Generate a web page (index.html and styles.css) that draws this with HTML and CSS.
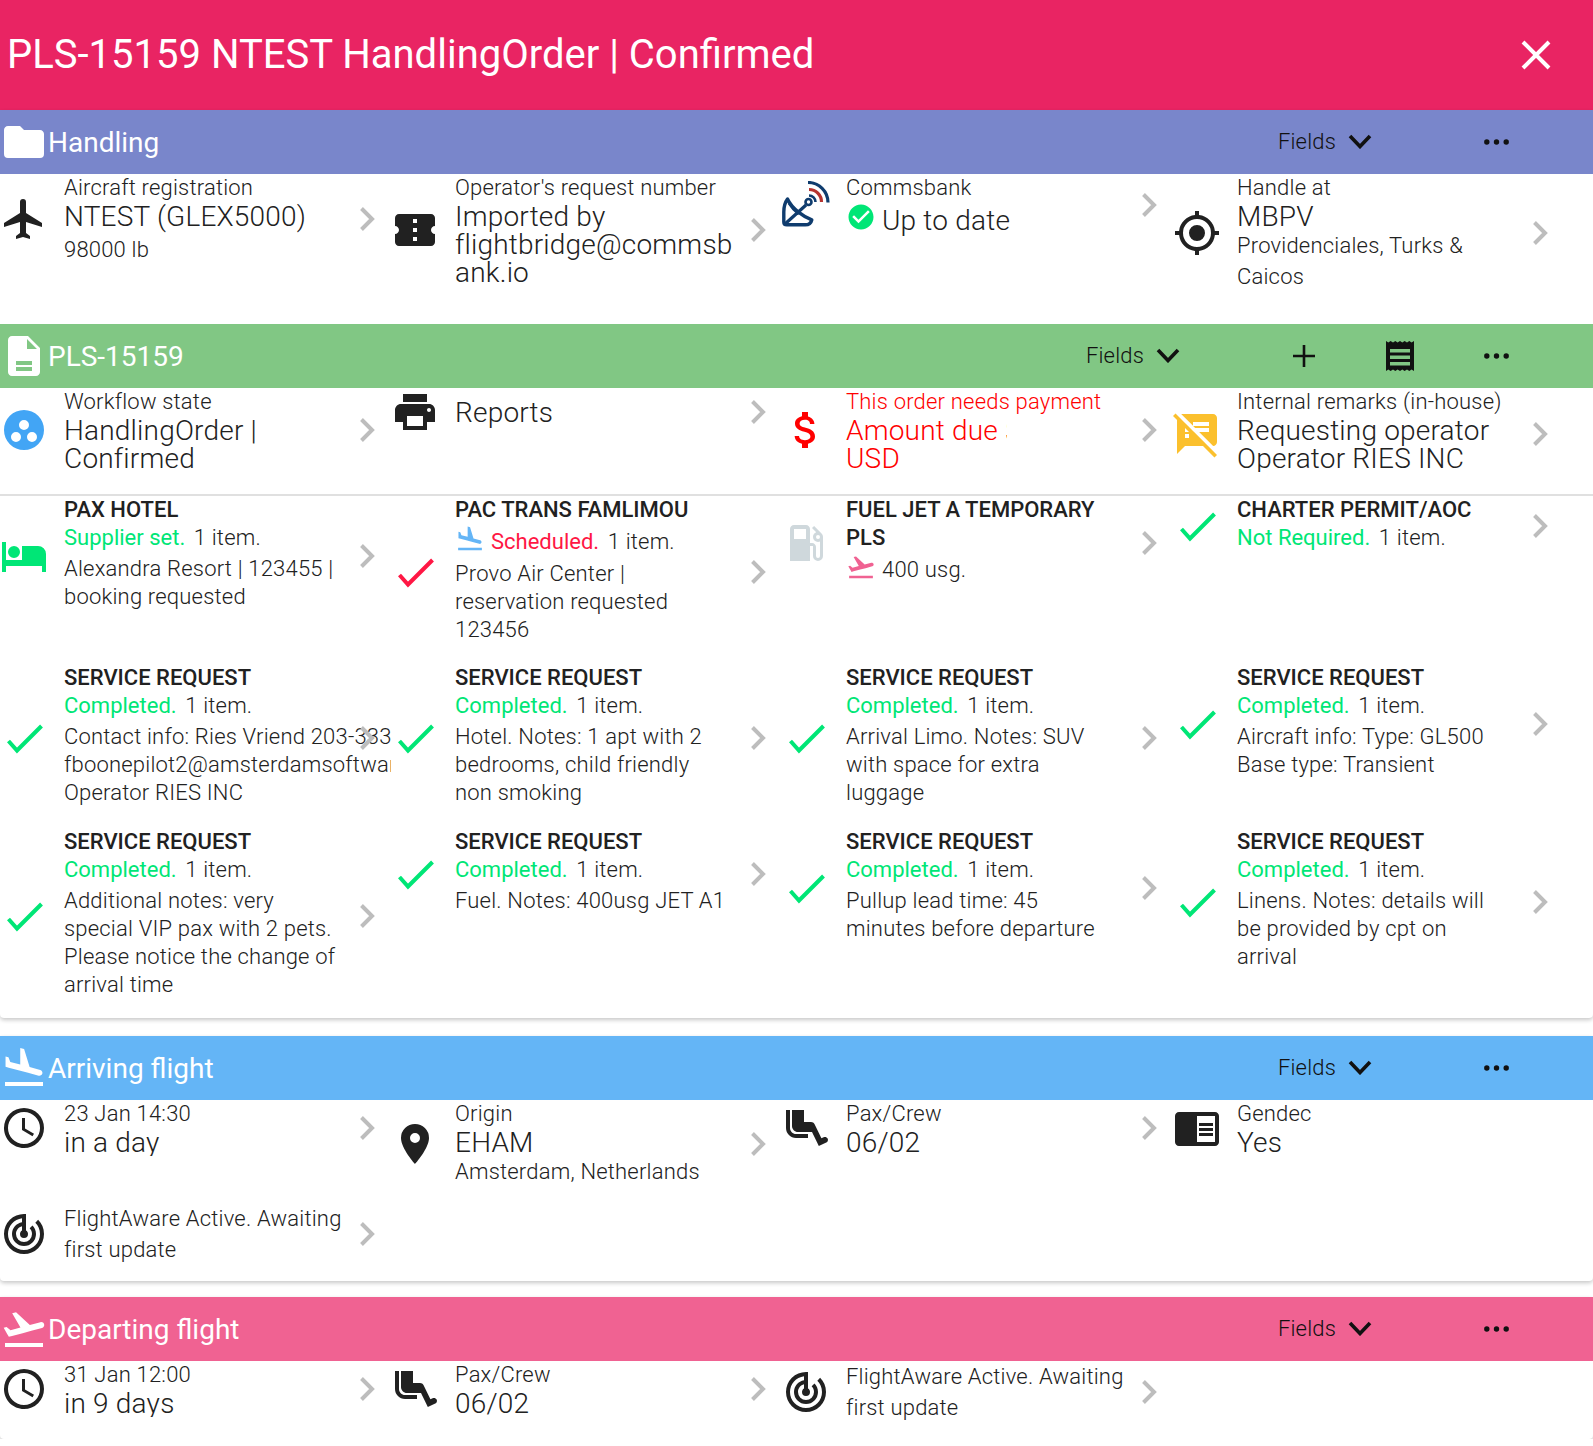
FILE: index.html
```html
<!DOCTYPE html>
<html lang="en">
<head>
<meta charset="utf-8">
<title>PLS-15159 NTEST HandlingOrder | Confirmed</title>
<link rel="stylesheet" href="styles.css">
</head>
<body>
<svg class="defs" width="0" height="0" aria-hidden="true">
  <defs>
    <symbol id="chev" viewBox="0 0 16 24"><path d="M2.5 1.5 13 12 2.5 22.5" fill="none" stroke="currentColor" stroke-width="4"/></symbol>
    <symbol id="down" viewBox="0 0 24 15"><path d="M2 2l10 10.500L22 2" fill="none" stroke="currentColor" stroke-width="3.600"/></symbol>
    <symbol id="dots" viewBox="0 0 25 6"><circle cx="2.800" cy="3" r="2.700"/><circle cx="12.500" cy="3" r="2.700"/><circle cx="22.200" cy="3" r="2.700"/></symbol>
    <symbol id="check" viewBox="0 0 48 48"><path d="M8.500 27 17 36.500 41.500 12" fill="none" stroke="currentColor" stroke-width="4"/></symbol>
    <symbol id="land" viewBox="0 0 24 24"><path d="M2.5 19h19v2h-19zm7.180-5.730l4.350 1.160 5.310 1.420c.8.210 1.620-.26 1.840-1.060.21-.8-.26-1.620-1.060-1.840l-5.310-1.420-2.760-9.020L10.120 2v8.280L5.150 8.950l-.93-2.320-1.450-.39v5.170l1.600.43 5.310 1.430z"/></symbol>
    <symbol id="takeoff" viewBox="0 0 24 24"><path d="M2.500 19h19v2h-19zm19.570-9.360c-.21-.8-1.040-1.280-1.840-1.060L14.920 10l-6.900-6.430-1.930.51 4.140 7.170-4.970 1.330-1.970-1.540-1.450.39 1.820 3.160.77 1.330 1.600-.43 5.310-1.420 4.350-1.160L21 11.490c.81-.23 1.280-1.050 1.070-1.850z"/></symbol>
    <symbol id="clock" viewBox="0 0 24 24"><path d="M12,20A8,8 0 0,0 20,12A8,8 0 0,0 12,4A8,8 0 0,0 4,12A8,8 0 0,0 12,20M12,2A10,10 0 0,1 22,12A10,10 0 0,1 12,22C6.470,22 2,17.500 2,12A10,10 0 0,1 12,2M12.500,7V12.250L17,14.920L16.250,16.150L11,13V7H12.500Z"/></symbol>
    <symbol id="seat" viewBox="0 0 24 24"><path d="M4 12V3H2v9c0 2.760 2.240 5 5 5h6v-2H7c-1.660 0-3-1.340-3-3zm18.830 5.240c-.38-.72-1.290-.97-2.030-.63l-1.090.5-3.410-6.980c-.34-.68-1.030-1.120-1.790-1.120L11 9V3H5v8c0 1.660 1.340 3 3 3h7l3.410 7 3.720-1.700c.77-.36 1.100-1.300.7-2.060z"/></symbol>
    <symbol id="radar" viewBox="0 0 24 24"><path d="M19.070,4.930L17.660,6.340C19.100,7.790 20,9.790 20,12A8,8 0 0,1 12,20A8,8 0 0,1 4,12C4,7.920 7.050,4.560 11,4.070V6.090C8.160,6.570 6,9.030 6,12A6,6 0 0,0 12,18A6,6 0 0,0 18,12C18,10.340 17.330,8.840 16.240,7.760L14.830,9.170C15.550,9.900 16,10.900 16,12A4,4 0 0,1 12,16A4,4 0 0,1 8,12C8,10.140 9.280,8.590 11,8.140V10.280C10.400,10.630 10,11.260 10,12A2,2 0 0,0 12,14A2,2 0 0,0 14,12C14,11.260 13.600,10.620 13,10.280V2H12A10,10 0 0,0 2,12A10,10 0 0,0 12,22A10,10 0 0,0 22,12C22,9.240 20.880,6.740 19.070,4.930Z"/></symbol>
  </defs>
</svg>

<header class="topbar">
  <h1 class="topbar-title">PLS-15159 NTEST HandlingOrder | Confirmed</h1>
  <svg class="close" viewBox="0 0 30 30"><path d="M2 2 28 28M28 2 2 28" fill="none" stroke="#fff" stroke-width="4"/></svg>
</header>

<section class="card card-flat">
  <div class="bar bar-purple">
    <svg class="ico ico-white" viewBox="0 0 24 24"><path d="M10,4H4C2.890,4 2,4.890 2,6V18A2,2 0 0,0 4,20H20A2,2 0 0,0 22,18V8C22,6.890 21.100,6 20,6H12L10,4Z"/></svg>
    <span class="bar-title">Handling</span>
    <div class="fields">Fields<svg class="down"><use href="#down"/></svg></div>
    <div class="action"><svg class="dots"><use href="#dots"/></svg></div>
  </div>
  <div class="grid grid-pad-16">
    <div class="item">
      <svg class="ico" viewBox="0 0 24 24"><path d="M21,16V14L13,9V3.500A1.500,1.500 0 0,0 11.500,2A1.500,1.500 0 0,0 10,3.500V9L2,14V16L10,13.500V19L8,20.500V22L11.500,21L15,22V20.500L13,19V13.500L21,16Z"/></svg>
      <div class="txt"><div class="label">Aircraft registration</div><div class="value">NTEST (GLEX5000)</div><div class="note note-lb">98000 lb</div></div>
      <svg class="chev"><use href="#chev"/></svg>
    </div>
    <div class="item">
      <svg class="ico" viewBox="0 0 24 24"><path d="M22 10V6c0-1.110-.9-2-2-2H4c-1.100 0-1.990.89-1.990 2v4c1.100 0 1.990.9 1.990 2s-.89 2-2 2v4c0 1.100.9 2 2 2h16c1.100 0 2-.9 2-2v-4c-1.100 0-2-.9-2-2s.9-2 2-2zm-9 7.500h-2v-2h2v2zm0-4.500h-2v-2h2v2zm0-4.500h-2v-2h2v2z"/></svg>
      <div class="txt"><div class="label">Operator's request number</div><div class="value">Imported by flightbridge@commsbank.io</div></div>
      <svg class="chev"><use href="#chev"/></svg>
    </div>
    <div class="item">
      <svg class="ico" viewBox="0 0 48 48">
        <path d="M5.500 18C2.500 22 1.800 26 1.800 31v10c0 1.500 1 2.800 3 2.800h18.500c3.500 0 5.800-1.800 6.500-5C22 36 10 28 5.500 18z" fill="none" stroke="#0f3c6e" stroke-width="3.400" stroke-linejoin="round"/>
        <path d="M3 43 24 24M7 22c2.500 4 6 8 10 11" fill="none" stroke="#0f3c6e" stroke-width="3.200"/>
        <circle cx="26.500" cy="21" r="3" fill="none" stroke="#0f3c6e" stroke-width="2.600"/>
        <path d="M27 14.500A6.500 6.500 0 0 1 33.500 21" fill="none" stroke="#0f3c6e" stroke-width="2.600"/>
        <path d="M27 8.500A12.500 12.500 0 0 1 39.500 21" fill="none" stroke="#b5332f" stroke-width="3.200"/>
        <path d="M26 1.500A20 20 0 0 1 46 21.500" fill="none" stroke="#0f3c6e" stroke-width="3.200"/>
      </svg>
      <div class="txt"><div class="label">Commsbank</div>
        <div class="ico-line ico-line-34"><svg class="mini mini-green" viewBox="0 0 24 24"><path d="M12 2C6.480 2 2 6.480 2 12s4.480 10 10 10 10-4.480 10-10S17.520 2 12 2zm-2 15l-5-5 1.410-1.410L10 14.170l7.590-7.590L19 8l-9 9z"/></svg><span class="value">Up to date</span></div></div>
      <svg class="chev"><use href="#chev"/></svg>
    </div>
    <div class="item">
      <svg class="ico" viewBox="0 0 24 24"><path d="M12,8A4,4 0 0,1 16,12A4,4 0 0,1 12,16A4,4 0 0,1 8,12A4,4 0 0,1 12,8M3.050,13H1V11H3.050C3.500,6.830 6.830,3.500 11,3.050V1H13V3.050C17.170,3.500 20.500,6.830 20.950,11H23V13H20.950C20.500,17.170 17.170,20.500 13,20.950V23H11V20.950C6.830,20.500 3.500,17.170 3.050,13M12,5A7,7 0 0,0 5,12A7,7 0 0,0 12,19A7,7 0 0,0 19,12A7,7 0 0,0 12,5Z"/></svg>
      <div class="txt"><div class="label">Handle at</div><div class="value">MBPV</div><div class="sub">Providenciales, Turks &amp; Caicos</div></div>
      <svg class="chev"><use href="#chev"/></svg>
    </div>
  </div>

  <div class="bar bar-green">
    <svg class="ico ico-white" viewBox="0 0 24 24"><path fill-rule="evenodd" d="M14 2H6c-1.100 0-1.990.9-1.990 2L4 20c0 1.100.89 2 1.990 2H18c1.100 0 2-.9 2-2V8zM16 19.500H8v-2h8zM16 16.500H8v-2h8zM13.500 3.500 18.500 8.500H13.500z"/></svg>
    <span class="bar-title">PLS-15159</span>
    <div class="fields">Fields<svg class="down"><use href="#down"/></svg></div>
    <div class="action"><svg class="plus" viewBox="0 0 22 22"><path d="M11 0V22M0 11H22" fill="none" stroke="currentColor" stroke-width="2.600"/></svg></div>
    <div class="action"><svg class="receipt" viewBox="0 0 28 30"><path fill-rule="evenodd" d="M0 0 2.300 1.500 4.600 0 7 1.500 9.300 0 11.600 1.500 14 0 16.300 1.500 18.600 0 21 1.500 23.300 0 25.600 1.500 28 0V30L25.600 28.500 23.300 30 21 28.500 18.600 30 16.300 28.500 14 30 11.600 28.500 9.300 30 7 28.500 4.600 30 2.300 28.500 0 30ZM4 8V11.500H24V8ZM4 14.500V18H24V14.500ZM4 21V24.500H24V21Z"/></svg></div>
    <div class="action"><svg class="dots"><use href="#dots"/></svg></div>
  </div>
  <div class="grid grid-pad-6">
    <div class="item">
      <svg class="ico" viewBox="0 0 48 48"><path fill-rule="evenodd" fill="#42a5f5" d="M24 4a20 20 0 1 0 0 40 20 20 0 0 0 0-40zM24 14a5 5 0 1 1 0 10 5 5 0 0 1 0-10zM16 26a5 5 0 1 1 0 10 5 5 0 0 1 0-10zM32 26a5 5 0 1 1 0 10 5 5 0 0 1 0-10z"/></svg>
      <div class="txt"><div class="label">Workflow state</div><div class="value">HandlingOrder | Confirmed</div></div>
      <svg class="chev"><use href="#chev"/></svg>
    </div>
    <div class="item">
      <svg class="ico" viewBox="0 0 24 24"><path d="M19 8H5c-1.660 0-3 1.340-3 3v6h4v4h12v-4h4v-6c0-1.660-1.340-3-3-3zm-3 11H8v-5h8v5zm3-7c-.55 0-1-.45-1-1s.45-1 1-1 1 .45 1 1-.45 1-1 1zm-1-9H6v4h12V3z"/></svg>
      <div class="txt"><div class="value value-solo">Reports</div></div>
      <svg class="chev"><use href="#chev"/></svg>
    </div>
    <div class="item item-red">
      <svg class="ico ico-red" viewBox="0 0 24 24"><path d="M11.800 10.900c-2.270-.59-3-1.200-3-2.150 0-1.090 1.010-1.850 2.700-1.850 1.780 0 2.440.85 2.500 2.100h2.210c-.07-1.720-1.120-3.300-3.210-3.810V3h-3v2.160c-1.940.42-3.500 1.680-3.500 3.610 0 2.310 1.910 3.460 4.700 4.130 2.500.6 3 1.480 3 2.410 0 .69-.49 1.790-2.700 1.790-2.060 0-2.870-.92-2.980-2.100h-2.200c.12 2.190 1.760 3.420 3.680 3.830V21h3v-2.150c1.950-.37 3.500-1.500 3.500-3.550 0-2.840-2.430-3.810-4.700-4.400z"/></svg>
      <div class="txt"><div class="label">This order needs payment</div><div class="value">Amount due <span class="clip">$</span><br>USD</div></div>
      <svg class="chev"><use href="#chev"/></svg>
    </div>
    <div class="item item-remarks">
      <svg class="ico ico-amber" viewBox="0 0 24 24"><path d="M10.540 11l-.54-.54L7.540 8 6 6.460 2.380 2.840 1.270 1.730 0 3l2.010 2.010L2 22l4-4h9l5.730 5.730L22 22.460 17.540 18l-7-7zM8 14H6v-2h2v2zm-2-3V9l2 2H6zm14-9H4.080L10 7.920V6h8v2h-7.920l1 1H18v2h-4.920l6.990 6.990C21.140 17.950 22 17.080 22 16V4c0-1.100-.9-2-2-2z"/></svg>
      <div class="txt"><div class="label">Internal remarks (in-house)</div><div class="value">Requesting operator<br>Operator RIES INC</div></div>
      <svg class="chev"><use href="#chev"/></svg>
    </div>
  </div>
  <div class="grid grid-status">
    <div class="item item-status">
      <svg class="ico ico-green" viewBox="0 0 24 24"><path d="M19,7H11V14H3V5H1V20H3V17H21V20H23V11A4,4 0 0,0 19,7M7,13A3,3 0 0,0 10,10A3,3 0 0,0 7,7A3,3 0 0,0 4,10A3,3 0 0,0 7,13Z"/></svg>
      <div class="txt"><div class="title">PAX HOTEL</div><div class="status"><span class="ok">Supplier set.</span> 1 item.</div><div class="note">Alexandra Resort | 123455 | booking requested</div></div>
      <svg class="chev"><use href="#chev"/></svg>
    </div>
    <div class="item item-status item-tight">
      <svg class="ico ico-scarlet"><use href="#check"/></svg>
      <div class="txt"><div class="title">PAC TRANS FAMLIMOU</div>
        <div class="ico-line"><svg class="mini mini-blue"><use href="#land"/></svg><span class="status"><span class="bad">Scheduled.</span> 1 item.</span></div>
        <div class="note">Provo Air Center | reservation requested 123456</div></div>
      <svg class="chev"><use href="#chev"/></svg>
    </div>
    <div class="item item-status">
      <svg class="ico ico-fuel" viewBox="0 0 24 24"><path d="M18,10A1,1 0 0,1 17,9A1,1 0 0,1 18,8A1,1 0 0,1 19,9A1,1 0 0,1 18,10M12,10H6V5H12M19.770,7.230L19.780,7.220L16.060,3.500L15,4.560L17.110,6.670C16.170,7 15.500,7.930 15.500,9A2.500,2.500 0 0,0 18,11.500C18.360,11.500 18.690,11.420 19,11.290V18.500A1,1 0 0,1 18,19.500A1,1 0 0,1 17,18.500V14C17,12.890 16.100,12 15,12H14V5C14,3.890 13.100,3 12,3H6C4.890,3 4,3.890 4,5V21H14V13.500H15.500V18.500A2.500,2.500 0 0,0 18,21A2.500,2.500 0 0,0 20.500,18.500V9C20.500,8.310 20.220,7.680 19.770,7.230Z"/></svg>
      <div class="txt"><div class="title">FUEL JET A TEMPORARY PLS</div>
        <div class="ico-line"><svg class="mini mini-pink"><use href="#takeoff"/></svg><span class="status">400 usg.</span></div></div>
      <svg class="chev"><use href="#chev"/></svg>
    </div>
    <div class="item item-status">
      <svg class="ico ico-green"><use href="#check"/></svg>
      <div class="txt"><div class="title">CHARTER PERMIT/AOC</div><div class="status"><span class="ok">Not Required.</span> 1 item.</div></div>
      <svg class="chev"><use href="#chev"/></svg>
    </div>

    <div class="item item-status">
      <svg class="ico ico-green"><use href="#check"/></svg>
      <div class="txt"><div class="title">SERVICE REQUEST</div><div class="status"><span class="ok">Completed.</span> 1 item.</div><div class="note note-nowrap">Contact info: Ries Vriend 203-333<br>fboonepilot2@amsterdamsoftware.nl<br>Operator RIES INC</div></div>
      <svg class="chev"><use href="#chev"/></svg>
    </div>
    <div class="item item-status">
      <svg class="ico ico-green"><use href="#check"/></svg>
      <div class="txt"><div class="title">SERVICE REQUEST</div><div class="status"><span class="ok">Completed.</span> 1 item.</div><div class="note">Hotel. Notes: 1 apt with 2 bedrooms, child friendly non smoking</div></div>
      <svg class="chev"><use href="#chev"/></svg>
    </div>
    <div class="item item-status">
      <svg class="ico ico-green"><use href="#check"/></svg>
      <div class="txt"><div class="title">SERVICE REQUEST</div><div class="status"><span class="ok">Completed.</span> 1 item.</div><div class="note">Arrival Limo. Notes: SUV with space for extra luggage</div></div>
      <svg class="chev"><use href="#chev"/></svg>
    </div>
    <div class="item item-status">
      <svg class="ico ico-green"><use href="#check"/></svg>
      <div class="txt"><div class="title">SERVICE REQUEST</div><div class="status"><span class="ok">Completed.</span> 1 item.</div><div class="note">Aircraft info: Type: GL500<br>Base type: Transient</div></div>
      <svg class="chev"><use href="#chev"/></svg>
    </div>

    <div class="item item-status">
      <svg class="ico ico-green"><use href="#check"/></svg>
      <div class="txt"><div class="title">SERVICE REQUEST</div><div class="status"><span class="ok">Completed.</span> 1 item.</div><div class="note">Additional notes: very<br>special VIP pax with 2 pets.<br>Please notice the change of<br>arrival time</div></div>
      <svg class="chev"><use href="#chev"/></svg>
    </div>
    <div class="item item-status">
      <svg class="ico ico-green"><use href="#check"/></svg>
      <div class="txt"><div class="title">SERVICE REQUEST</div><div class="status"><span class="ok">Completed.</span> 1 item.</div><div class="note">Fuel. Notes: 400usg JET A1</div></div>
      <svg class="chev"><use href="#chev"/></svg>
    </div>
    <div class="item item-status">
      <svg class="ico ico-green"><use href="#check"/></svg>
      <div class="txt"><div class="title">SERVICE REQUEST</div><div class="status"><span class="ok">Completed.</span> 1 item.</div><div class="note">Pullup lead time: 45 minutes before departure</div></div>
      <svg class="chev"><use href="#chev"/></svg>
    </div>
    <div class="item item-status">
      <svg class="ico ico-green"><use href="#check"/></svg>
      <div class="txt"><div class="title">SERVICE REQUEST</div><div class="status"><span class="ok">Completed.</span> 1 item.</div><div class="note">Linens. Notes: details will be provided by cpt on arrival</div></div>
      <svg class="chev"><use href="#chev"/></svg>
    </div>
  </div>
</section>

<section class="card">
  <div class="bar bar-blue">
    <svg class="ico ico-white"><use href="#land"/></svg>
    <span class="bar-title">Arriving flight</span>
    <div class="fields">Fields<svg class="down"><use href="#down"/></svg></div>
    <div class="action"><svg class="dots"><use href="#dots"/></svg></div>
  </div>
  <div class="grid">
    <div class="item">
      <svg class="ico"><use href="#clock"/></svg>
      <div class="txt"><div class="label">23 Jan 14:30</div><div class="value">in a day</div></div>
      <svg class="chev"><use href="#chev"/></svg>
    </div>
    <div class="item">
      <svg class="ico" viewBox="0 0 24 24"><path d="M12,11.500A2.500,2.500 0 0,1 9.500,9A2.500,2.500 0 0,1 12,6.500A2.500,2.500 0 0,1 14.500,9A2.500,2.500 0 0,1 12,11.500M12,2A7,7 0 0,0 5,9C5,14.250 12,22 12,22C12,22 19,14.250 19,9A7,7 0 0,0 12,2Z"/></svg>
      <div class="txt"><div class="label">Origin</div><div class="value">EHAM</div><div class="sub">Amsterdam, Netherlands</div></div>
      <svg class="chev"><use href="#chev"/></svg>
    </div>
    <div class="item">
      <svg class="ico"><use href="#seat"/></svg>
      <div class="txt"><div class="label">Pax/Crew</div><div class="value">06/02</div></div>
      <svg class="chev"><use href="#chev"/></svg>
    </div>
    <div class="item">
      <svg class="ico" viewBox="0 0 24 24"><path d="M13 12h7v1.500h-7zm0-2.500h7V11h-7zm0 5h7V16h-7zM21 4H3c-1.100 0-2 .9-2 2v13c0 1.100.9 2 2 2h18c1.100 0 2-.9 2-2V6c0-1.100-.9-2-2-2zm0 15h-9V6h9v13z"/></svg>
      <div class="txt"><div class="label">Gendec</div><div class="value">Yes</div></div>
    </div>
    <div class="item">
      <svg class="ico"><use href="#radar"/></svg>
      <div class="txt"><div class="sub">FlightAware Active. Awaiting first update</div></div>
      <svg class="chev"><use href="#chev"/></svg>
    </div>
  </div>
</section>

<section class="card card-last">
  <div class="bar bar-pink">
    <svg class="ico ico-white"><use href="#takeoff"/></svg>
    <span class="bar-title">Departing flight</span>
    <div class="fields">Fields<svg class="down"><use href="#down"/></svg></div>
    <div class="action"><svg class="dots"><use href="#dots"/></svg></div>
  </div>
  <div class="grid">
    <div class="item">
      <svg class="ico"><use href="#clock"/></svg>
      <div class="txt"><div class="label">31 Jan 12:00</div><div class="value">in 9 days</div></div>
      <svg class="chev"><use href="#chev"/></svg>
    </div>
    <div class="item">
      <svg class="ico"><use href="#seat"/></svg>
      <div class="txt"><div class="label">Pax/Crew</div><div class="value">06/02</div></div>
      <svg class="chev"><use href="#chev"/></svg>
    </div>
    <div class="item">
      <svg class="ico"><use href="#radar"/></svg>
      <div class="txt"><div class="sub">FlightAware Active. Awaiting first update</div></div>
      <svg class="chev"><use href="#chev"/></svg>
    </div>
  </div>
</section>
</body>
</html>
```
FILE: styles.css
```css
* { box-sizing: border-box; }
html, body { margin: 0; padding: 0; background: #fff; }
body {
  font-family: Roboto, "Liberation Sans", sans-serif;
  color: #212121;
  overflow: hidden;
}
.defs { position: absolute; }

.topbar {
  height: 110px;
  background: #e92463;
  display: flex;
  align-items: center;
  padding: 0 42px 0 7px;
}
.topbar-title {
  flex: 1;
  margin: 0;
  font-size: 40px;
  font-weight: 400;
  line-height: 48px;
  color: #fff;
}
.close { width: 30px; height: 30px; }

.card {
  background: #fff;
  margin-bottom: 16px;
  border-radius: 0 0 4px 4px;
  box-shadow: 0 2px 4px rgba(0, 0, 0, .22);
}
.card-flat { margin-bottom: 18px; }
.card-last { margin-bottom: 0; }

.bar {
  height: 64px;
  display: flex;
  align-items: center;
  padding-right: 49px;
}
.bar-purple { background: #7986cb; }
.bar-green { background: #81c784; }
.bar-blue { background: #64b5f6; }
.bar-pink { background: #f06292; }
.bar-title {
  flex: 1;
  font-size: 28px;
  line-height: 32px;
  padding-top: 2px;
  color: #fff;
}
.fields {
  width: 246px;
  display: flex;
  align-items: center;
  justify-content: center;
  margin-bottom: 2px;
  font-size: 22px;
  font-weight: 300;
  letter-spacing: .2px;
  color: #111;
}
.down { width: 24px; height: 15px; margin-left: 12px; color: #111; }
.action { width: 96px; display: flex; justify-content: center; color: #111; }
.dots { width: 25px; height: 6px; fill: #111; }
.plus { width: 22px; height: 22px; }
.receipt { width: 28px; height: 30px; fill: #111; }

.ico {
  flex: none;
  width: 48px;
  height: 48px;
  fill: #212121;
  color: #212121;
}
.ico-white { fill: #fff; }
.ico-red { fill: #f00; }
.ico-amber { fill: #fbc02d; }
.ico-green { fill: #00e676; color: #00e676; }
.ico-scarlet { color: #ff1744; }
.ico-fuel { fill: #cfd8dc; }

.grid {
  display: grid;
  grid-template-columns: repeat(4, 391px);
  align-items: start;
  row-gap: 16px;
  padding-bottom: 16px;
}
.grid-pad-16 { padding-bottom: 32px; }
.grid-pad-6 { padding-bottom: 22px; border-bottom: 2px solid #e0e0e0; }
.grid-status { padding-bottom: 14px; }

.item {
  display: flex;
  align-items: center;
  overflow: hidden;
  min-height: 48px;
}
.item .ico { margin-right: 16px; }
.item-status { padding-bottom: 5px; }
.item-tight { padding-bottom: 4px; }
.item-status .ico, .item-status .chev { margin-top: 4px; }
.item-remarks .ico, .item-remarks .chev { margin-top: 8px; }
.txt { flex: none; width: 280px; align-self: flex-start; }
.chev {
  flex: none;
  width: 16px;
  height: 24px;
  margin-left: 15px;
  color: #bdbdbd;
}

.label, .note, .status {
  font-size: 22px;
  line-height: 28px;
  font-weight: 300;
  letter-spacing: .2px;
}
.value {
  font-size: 28px;
  line-height: 28px;
  font-weight: 300;
  letter-spacing: .2px;
  overflow-wrap: anywhere;
  padding-top: 1px;
  margin-bottom: -1px;
}
.value-solo { margin-top: 10px; }
.note { margin-top: 3px; max-width: 274px; }
.note-lb { margin-top: 6px; }
.note-nowrap { white-space: nowrap; max-width: none; }
.sub {
  font-size: 22px;
  line-height: 31px;
  font-weight: 300;
  letter-spacing: .2px;
}
.title {
  font-size: 22px;
  line-height: 28px;
  font-weight: 500;
}
.item-red .txt { color: #f00; }
.clip { display: inline-block; width: 2px; height: 24px; overflow: hidden; vertical-align: -2px; }
.ok { color: #00e676; margin-right: 3px; font-weight: 400; letter-spacing: 0; }
.bad { color: #ff1744; margin-right: 3px; font-weight: 400; letter-spacing: 0; }

.ico-line { display: flex; height: 33px; }
.ico-line-34 { height: 34px; }
.ico-line .status { margin-top: 4px; }
.ico-line .value { margin-top: 4px; }
.mini { flex: none; width: 30px; height: 30px; margin-right: 6px; }
.mini-green { fill: #00e676; }
.mini-blue { fill: #64b5f6; }
.mini-pink { fill: #f06292; }
```
